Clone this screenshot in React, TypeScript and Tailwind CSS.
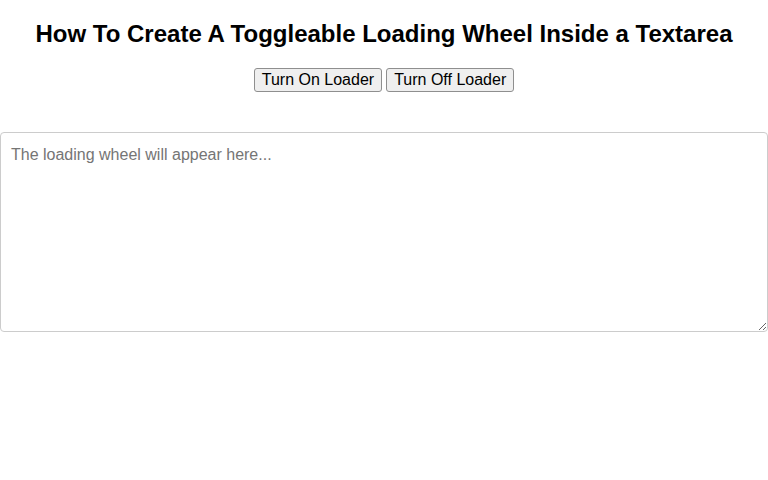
import { useState } from 'react';

const App = () => {
  const [loading, setLoading] = useState(false);

  return (
    <div className="font-['Liberation_Sans',Arial,sans-serif] text-black">
      <h1 className="mt-5 mb-5 text-center text-2xl leading-7 font-bold">
        How To Create A Toggleable Loading Wheel Inside a Textarea
      </h1>
      <div className="flex justify-center gap-1">
        <button
          className="h-6 rounded-[3px] border border-[#8f8f8f] bg-[#efefef] px-[7px] text-base leading-[20px] hover:bg-[#e5e5e5]"
          onClick={() => setLoading(true)}
        >
          Turn On Loader
        </button>
        <button
          className="h-6 rounded-[3px] border border-[#8f8f8f] bg-[#efefef] px-[7px] text-base leading-[20px] hover:bg-[#e5e5e5]"
          onClick={() => setLoading(false)}
        >
          Turn Off Loader
        </button>
      </div>
      <div className="relative mt-10">
        <textarea
          className="block h-[200px] w-full rounded-[4px] border border-[#ccc] p-[10px] text-base placeholder:text-[#757575] focus:outline-none"
          placeholder="The loading wheel will appear here..."
        />
        {loading && (
          <div className="absolute top-1/2 left-1/2 h-8 w-8 -translate-x-1/2 -translate-y-1/2 animate-spin rounded-full border-4 border-[#f3f3f3] border-t-[#3498db]" />
        )}
      </div>
    </div>
  );
};

export default App;
